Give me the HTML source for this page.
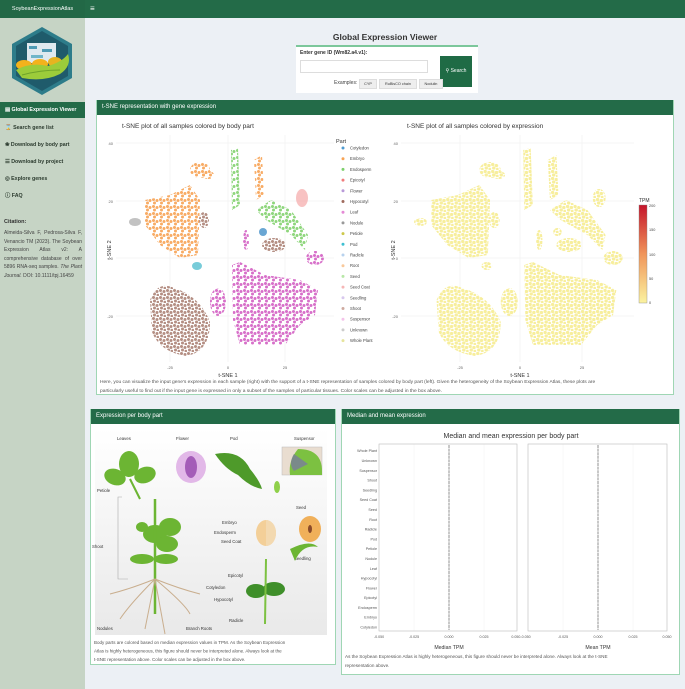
<!DOCTYPE html>
<html><head><meta charset="utf-8">
<style>
*{box-sizing:border-box;margin:0;padding:0}
body{width:685px;height:689px;overflow:hidden;background:#ecf0f5;font-family:"Liberation Sans",sans-serif;position:relative;color:#333}
.abs{position:absolute}
#hdr{left:0;top:0;width:685px;height:18px;background:#236b48}
#brand{left:0;top:0;width:85px;height:18px;background:#226846;color:#fff;font-size:5.5px;text-align:center;line-height:18px}
#side{left:0;top:18px;width:85px;height:671px;background:#c6d4c5}
.mi{position:absolute;left:0;width:85px;height:16px;font-size:5.3px;font-weight:bold;color:#2c3b2f;padding-left:5px;line-height:16px;white-space:nowrap}
.box{position:absolute;background:#fff;border:1px solid #9fd6b4;border-top:none}
.bh{background:#236b48;color:#fff;font-size:6px;height:15px;line-height:15px;padding-left:5px}
.sm{font-size:5px;color:#555;line-height:8.5px}
</style></head><body>
<div id="hdr" class="abs"></div>
<div id="brand" class="abs">SoybeanExpressionAtlas</div>
<div class="abs" style="left:90px;top:4px;color:#fff;font-size:8px">&#8801;</div>
<div id="side" class="abs"></div>
<svg class="abs" style="left:0;top:18px" width="85" height="80">
<polygon points="42,9 72,26 72,60 42,77 12,60 12,26" fill="#2d7c8a"/>
<polygon points="42,13 68,28 68,58 42,73 16,58 16,28" fill="#1f5b6b"/>
<rect x="27" y="25" width="29" height="20" fill="#dfe9ef"/>
<rect x="29" y="28" width="8" height="3" fill="#4f9bb5"/><rect x="42" y="31" width="10" height="3" fill="#4f9bb5"/><rect x="31" y="37" width="12" height="3" fill="#6fb5c9"/>
<ellipse cx="24" cy="47" rx="8" ry="5" fill="#f3b21c"/><ellipse cx="40" cy="46" rx="8" ry="5" fill="#f3b21c"/><ellipse cx="55" cy="44" rx="7" ry="5" fill="#e6b420"/>
<path d="M16 52 Q30 44 48 48 Q62 44 68 36 Q72 48 60 56 Q44 64 22 60 Z" fill="#9ccc3a"/>
<path d="M22 57 Q40 52 60 52" stroke="#6fa32a" stroke-width="1" fill="none"/>
</svg>
<div class="mi" style="top:102px;background:#236b48;color:#fff">&#9636; Global Expression Viewer</div>
<div class="mi" style="top:120px">&#8987; Search gene list</div>
<div class="mi" style="top:137px">&#10048; Download by body part</div>
<div class="mi" style="top:154px">&#9776; Download by project</div>
<div class="mi" style="top:171px">&#9678; Explore genes</div>
<div class="mi" style="top:188px">&#9432; FAQ</div>
<div class="abs" style="left:4px;top:219px;font-size:5.5px;font-weight:bold;color:#333">Citation:</div>
<div class="abs sm" style="left:4px;top:229px;width:78px;text-align:justify;color:#444">Almeida-Silva F, Pedrosa-Silva F, Venancio TM (2023). The Soybean Expression Atlas v2: A comprehensive database of over 5896 RNA-seq samples. <i>The Plant Journal.</i> DOI: 10.1111/tpj.16459</div>

<div class="abs" style="left:296px;top:32px;width:178px;text-align:center;font-size:8.5px;font-weight:bold;color:#333">Global Expression Viewer</div>
<div class="abs" style="left:296px;top:45px;width:182px;height:48px;background:#fff;border-top:2px solid #7cc79b"></div>
<div class="abs" style="left:300px;top:50px;font-size:5px;font-weight:bold">Enter gene ID (Wm82.a4.v1):</div>
<div class="abs" style="left:300px;top:60px;width:128px;height:13px;border:1px solid #ddd;background:#fff"></div>
<div class="abs" style="left:440px;top:56px;width:32px;height:31px;background:#1f6b45;color:#fff;font-size:5px;text-align:center;line-height:31px">&#9906; Search</div>
<div class="abs" style="left:334px;top:80px;font-size:5px;color:#444">Examples:</div>
<div class="abs" style="left:359px;top:79px;width:18px;height:10px;background:#eee;border:1px solid #ddd;font-size:3.8px;text-align:center;line-height:9px">CYP</div>
<div class="abs" style="left:379px;top:79px;width:38px;height:10px;background:#eee;border:1px solid #ddd;font-size:3.8px;text-align:center;line-height:9px">RuBisCO chain</div>
<div class="abs" style="left:419px;top:79px;width:24px;height:10px;background:#eee;border:1px solid #ddd;font-size:3.8px;text-align:center;line-height:9px">Nodulin</div>

<div class="box" style="left:96px;top:100px;width:578px;height:295px"><div class="bh">t-SNE representation with gene expression</div></div>
<svg class="abs" style="left:96px;top:100px" width="578" height="295" font-family="Liberation Sans" >
<defs>
<pattern id="pB" width="7" height="7" patternUnits="userSpaceOnUse" fill="#b48e83" opacity=".75"><circle cx="1.5" cy="1.5" r="1.5"/><circle cx="5" cy="2.5" r="1.5"/><circle cx="2.5" cy="5" r="1.5"/><circle cx="5.8" cy="6" r="1.3"/></pattern>
<pattern id="pP" width="7" height="7" patternUnits="userSpaceOnUse" fill="#d76fc9" opacity=".75"><circle cx="1.5" cy="1.5" r="1.5"/><circle cx="5" cy="2.5" r="1.5"/><circle cx="2.5" cy="5" r="1.5"/></pattern>
<pattern id="pO" width="7" height="7" patternUnits="userSpaceOnUse" fill="#f8ab64" opacity=".75"><circle cx="1.5" cy="1.5" r="1.5"/><circle cx="5" cy="2.5" r="1.5"/><circle cx="2.5" cy="5" r="1.5"/></pattern>
<pattern id="pG" width="7" height="7" patternUnits="userSpaceOnUse" fill="#8ed67c" opacity=".8"><circle cx="1.5" cy="1.5" r="1.5"/><circle cx="5" cy="2.5" r="1.5"/><circle cx="2.5" cy="5" r="1.5"/></pattern>
<pattern id="pY" width="7" height="7" patternUnits="userSpaceOnUse" fill="#f7ee9c"><circle cx="1.5" cy="1.5" r="1.6"/><circle cx="5" cy="2.5" r="1.6"/><circle cx="2.5" cy="5" r="1.6"/><circle cx="5.8" cy="6" r="1.3"/></pattern>
<linearGradient id="cb" x1="0" y1="1" x2="0" y2="0"><stop offset="0" stop-color="#fbf3a0"/><stop offset=".5" stop-color="#f0955a"/><stop offset="1" stop-color="#c5152b"/></linearGradient>
</defs>
<text x="26" y="28" font-size="6.5" fill="#333">t-SNE plot of all samples colored by body part</text>
<text x="311" y="28" font-size="6.5" fill="#333">t-SNE plot of all samples colored by expression</text>
<g stroke="#eee" stroke-width=".6">
<line x1="20" y1="43" x2="238" y2="43"/><line x1="20" y1="101" x2="238" y2="101"/><line x1="20" y1="158" x2="238" y2="158"/><line x1="20" y1="216" x2="238" y2="216"/>
<line x1="74" y1="35" x2="74" y2="262"/><line x1="132" y1="35" x2="132" y2="262"/><line x1="189" y1="35" x2="189" y2="262"/>
<line x1="305" y1="43" x2="538" y2="43"/><line x1="305" y1="101" x2="538" y2="101"/><line x1="305" y1="158" x2="538" y2="158"/><line x1="305" y1="216" x2="538" y2="216"/>
<line x1="364" y1="35" x2="364" y2="262"/><line x1="424" y1="35" x2="424" y2="262"/><line x1="486" y1="35" x2="486" y2="262"/>
</g>
<g>
<path d="M54 200 Q62 180 78 188 Q104 196 114 222 Q114 252 90 256 Q64 252 56 232 Z" fill="url(#pB)"/>
<path d="M136 165 L144 162 L169 175 L204 180 L222 190 L219 215 L204 225 L189 245 L144 245 L137 220 Z" fill="url(#pP)"/>
<ellipse cx="122" cy="202" rx="8" ry="14" fill="url(#pP)"/>
<ellipse cx="219" cy="158" rx="9" ry="7" fill="url(#pP)"/>
<path d="M49 100 L74 95 L94 85 L104 100 L102 155 L84 158 L64 145 L49 125 Z" fill="url(#pO)"/>
<ellipse cx="104" cy="70" rx="10" ry="8" fill="url(#pO)"/>
<ellipse cx="39" cy="122" rx="6" ry="4" fill="#999" opacity=".6"/>
<path d="M135 50 L142 48 L144 105 L136 110 Z" fill="url(#pG)"/>
<path d="M160 110 L175 100 L195 110 L212 135 L209 150 L195 135 L170 120 Z" fill="url(#pG)"/>
<path d="M158 60 L166 55 L168 95 L160 100 Z" fill="url(#pO)"/>
<ellipse cx="206" cy="98" rx="6" ry="9" fill="#f39a9a" opacity=".6"/>
<ellipse cx="178" cy="145" rx="12" ry="7" fill="url(#pB)"/>
<ellipse cx="101" cy="166" rx="5" ry="4" fill="#3fb7c9" opacity=".7"/>
<ellipse cx="108" cy="120" rx="5" ry="8" fill="url(#pB)"/>
<ellipse cx="167" cy="132" rx="4" ry="4" fill="#2b80c0" opacity=".7"/>
<ellipse cx="112" cy="75" rx="6" ry="4" fill="url(#pO)"/>
<ellipse cx="150" cy="140" rx="3" ry="10" fill="url(#pP)"/>
</g>
<g transform="translate(424,0) scale(1.07,1) translate(-132,0)" fill="url(#pY)">
<path d="M54 200 Q62 180 78 188 Q104 196 114 222 Q114 252 90 256 Q64 252 56 232 Z"/>
<path d="M136 165 L144 162 L169 175 L204 180 L222 190 L219 215 L204 225 L189 245 L144 245 L137 220 Z"/>
<ellipse cx="122" cy="202" rx="8" ry="14"/><ellipse cx="219" cy="158" rx="9" ry="7"/>
<path d="M49 100 L74 95 L94 85 L104 100 L102 155 L84 158 L64 145 L49 125 Z"/>
<ellipse cx="104" cy="70" rx="10" ry="8"/><ellipse cx="39" cy="122" rx="6" ry="4"/>
<path d="M135 50 L142 48 L144 105 L136 110 Z"/>
<path d="M160 110 L175 100 L195 110 L212 135 L209 150 L195 135 L170 120 Z"/>
<path d="M158 60 L166 55 L168 95 L160 100 Z"/>
<ellipse cx="206" cy="98" rx="6" ry="9"/><ellipse cx="178" cy="145" rx="12" ry="7"/>
<ellipse cx="101" cy="166" rx="5" ry="4"/><ellipse cx="108" cy="120" rx="5" ry="8"/><ellipse cx="167" cy="132" rx="4" ry="4"/>
<ellipse cx="112" cy="75" rx="6" ry="4"/><ellipse cx="150" cy="140" rx="3" ry="10"/>
</g>
<g font-size="4" fill="#666">
<text x="17" y="45" text-anchor="end">40</text><text x="17" y="103" text-anchor="end">20</text><text x="17" y="160" text-anchor="end">0</text><text x="17" y="218" text-anchor="end">-20</text>
<text x="74" y="269" text-anchor="middle">-25</text><text x="132" y="269" text-anchor="middle">0</text><text x="189" y="269" text-anchor="middle">25</text>
<text x="302" y="45" text-anchor="end">40</text><text x="302" y="103" text-anchor="end">20</text><text x="302" y="160" text-anchor="end">0</text><text x="302" y="218" text-anchor="end">-20</text>
<text x="364" y="269" text-anchor="middle">-25</text><text x="424" y="269" text-anchor="middle">0</text><text x="486" y="269" text-anchor="middle">25</text>
</g>
<text x="132" y="277" font-size="5.5" text-anchor="middle" fill="#333">t-SNE 1</text>
<text x="424" y="277" font-size="5.5" text-anchor="middle" fill="#333">t-SNE 1</text>
<text transform="translate(15,150) rotate(-90)" font-size="5.5" text-anchor="middle" fill="#333">t-SNE 2</text>
<text transform="translate(299,150) rotate(-90)" font-size="5.5" text-anchor="middle" fill="#333">t-SNE 2</text>
<text x="240" y="43" font-size="5.5" fill="#333">Part</text>
<g font-size="4.2" fill="#444">
<circle cx="247" cy="48" r="1.5" fill="#4f9bd1"/><text x="254" y="49.5">Cotyledon</text>
<circle cx="247" cy="58.7" r="1.5" fill="#f8a354"/><text x="254" y="60.2">Embryo</text>
<circle cx="247" cy="69.4" r="1.5" fill="#7dd06c"/><text x="254" y="70.9">Endosperm</text>
<circle cx="247" cy="80.1" r="1.5" fill="#f07c7c"/><text x="254" y="81.6">Epicotyl</text>
<circle cx="247" cy="90.8" r="1.5" fill="#b89ad8"/><text x="254" y="92.3">Flower</text>
<circle cx="247" cy="101.5" r="1.5" fill="#a06b5e"/><text x="254" y="103">Hypocotyl</text>
<circle cx="247" cy="112.2" r="1.5" fill="#e58ad6"/><text x="254" y="113.7">Leaf</text>
<circle cx="247" cy="122.9" r="1.5" fill="#999"/><text x="254" y="124.4">Nodule</text>
<circle cx="247" cy="133.6" r="1.5" fill="#cdc84a"/><text x="254" y="135.1">Petiole</text>
<circle cx="247" cy="144.3" r="1.5" fill="#3fc0d2"/><text x="254" y="145.8">Pod</text>
<circle cx="247" cy="155" r="1.5" fill="#b8d2ee"/><text x="254" y="156.5">Radicle</text>
<circle cx="247" cy="165.7" r="1.5" fill="#f9c99b"/><text x="254" y="167.2">Root</text>
<circle cx="247" cy="176.4" r="1.5" fill="#b8e8a8"/><text x="254" y="177.9">Seed</text>
<circle cx="247" cy="187.1" r="1.5" fill="#f6b6b6"/><text x="254" y="188.6">Seed Coat</text>
<circle cx="247" cy="197.8" r="1.5" fill="#d8c8ee"/><text x="254" y="199.3">Seedling</text>
<circle cx="247" cy="208.5" r="1.5" fill="#cfaaa0"/><text x="254" y="210">Shoot</text>
<circle cx="247" cy="219.2" r="1.5" fill="#f4c3ea"/><text x="254" y="220.7">Suspensor</text>
<circle cx="247" cy="229.9" r="1.5" fill="#ccc"/><text x="254" y="231.4">Unknown</text>
<circle cx="247" cy="240.6" r="1.5" fill="#e6e49c"/><text x="254" y="242.1">Whole Plant</text>
</g>
<text x="543" y="102" font-size="5" fill="#333">TPM</text>
<rect x="543" y="105" width="8" height="98" fill="url(#cb)" stroke="#888" stroke-width=".4"/>
<g font-size="3.8" fill="#444"><text x="553" y="107">200</text><text x="553" y="131">150</text><text x="553" y="156">100</text><text x="553" y="180">50</text><text x="553" y="204">0</text></g>
<text x="4" y="283" font-size="4.9" fill="#555">Here, you can visualize the input gene's expression in each sample (right) with the support of a t-SNE representation of samples colored by body part (left). Given the heterogeneity of the Soybean Expression Atlas, these plots are</text>
<text x="4" y="292" font-size="4.9" fill="#555">particularly useful to find out if the input gene is expressed in only a subset of the samples of particular tissues. Color scales can be adjusted in the box above.</text>
</svg>

<div class="box" style="left:90px;top:409px;width:246px;height:256px"><div class="bh">Expression per body part</div></div>
<svg class="abs" style="left:90px;top:409px" width="246" height="256" font-family="Liberation Sans">
<defs><linearGradient id="bg" x1="0" y1="0" x2="0" y2="1"><stop offset="0" stop-color="#fff"/><stop offset="1" stop-color="#e9e9e9"/></linearGradient></defs>
<rect x="5" y="19" width="232" height="207" fill="url(#bg)"/>
<g font-size="4.3" fill="#333">
<text x="27" y="31">Leaves</text><text x="86" y="31">Flower</text><text x="140" y="31">Pod</text><text x="204" y="31">Suspensor</text>
<text x="7" y="83">Petiole</text><text x="206" y="100">Seed</text><text x="2" y="139">Shoot</text>
<text x="132" y="115">Embryo</text><text x="124" y="125">Endosperm</text><text x="131" y="134">Seed Coat</text><text x="204" y="151">Seedling</text>
<text x="138" y="168">Epicotyl</text><text x="116" y="180">Cotyledon</text><text x="124" y="192">Hypocotyl</text><text x="139" y="213">Radicle</text>
<text x="7" y="221">Nodules</text><text x="96" y="221">Branch Roots</text>
</g>
<g fill="#6cb533">
<ellipse cx="39" cy="55" rx="10" ry="13"/><ellipse cx="25" cy="68" rx="11" ry="8" transform="rotate(20 25 68)"/><ellipse cx="55" cy="66" rx="11" ry="8" transform="rotate(-20 55 66)"/>
<path d="M125 45 Q150 40 160 60 Q170 72 172 80 Q160 78 148 66 Q135 60 125 45Z" fill="#4e9a2a"/>
<ellipse cx="65" cy="125" rx="12" ry="9"/><ellipse cx="80" cy="118" rx="11" ry="9"/><ellipse cx="77" cy="135" rx="11" ry="8"/>
<ellipse cx="52" cy="150" rx="12" ry="5"/><ellipse cx="76" cy="150" rx="12" ry="5"/><ellipse cx="52" cy="118" rx="6" ry="5"/>
<ellipse cx="166" cy="182" rx="10" ry="7" fill="#3f8f2a"/><ellipse cx="184" cy="180" rx="11" ry="7" fill="#3f8f2a"/>
<path d="M200 140 Q220 130 228 138 Q212 135 205 152 Z"/>
</g>
<path d="M40 70 L50 90" stroke="#6cb533" stroke-width="2"/>
<ellipse cx="101" cy="58" rx="15" ry="16" fill="#e2b8e8"/><ellipse cx="101" cy="58" rx="6" ry="11" fill="#a45cb8"/>
<rect x="192" y="38" width="40" height="28" fill="#e9ddd0" stroke="#bbb" stroke-width=".5"/>
<path d="M208 40 Q232 40 232 62 L232 66 L200 66 Q198 52 208 40Z" fill="#7cc141"/>
<path d="M204 45 L218 55 L204 62 Q198 55 204 45Z" fill="#7a8a8a"/>
<ellipse cx="187" cy="78" rx="3" ry="6" fill="#8fd04a"/>
<ellipse cx="176" cy="124" rx="10" ry="13" fill="#f3cf98"/><path d="M176 111 A10 13 0 0 1 176 137" fill="#f3d9b0"/>
<ellipse cx="220" cy="120" rx="11" ry="13" fill="#f0b05a"/><ellipse cx="220" cy="120" rx="2" ry="4" fill="#8a4a2a"/>
<path d="M65 90 L65 205" stroke="#6cb533" stroke-width="2.5"/>
<path d="M32 88 L28 88 L28 170 L38 170" stroke="#aaa" fill="none" stroke-width=".6"/>
<g stroke="#c9ae8e" stroke-width="1" fill="none"><path d="M65 170 Q40 180 20 185"/><path d="M65 170 Q90 180 110 185"/><path d="M65 170 L55 220"/><path d="M65 170 L75 225"/><path d="M65 170 Q40 195 30 210"/><path d="M65 170 Q95 195 100 205"/></g>
<path d="M176 150 L175 215" stroke="#7cc141" stroke-width="2"/>
<g font-size="4.5" fill="#555">
<text x="4" y="235">Body parts are colored based on median expression values in TPM. As the Soybean Expression</text>
<text x="4" y="243.5">Atlas is highly heterogeneous, this figure should never be interpreted alone. Always look at the</text>
<text x="4" y="252">t-SNE representation above. Color scales can be adjusted in the box above.</text>
</g>
</svg>

<div class="box" style="left:341px;top:409px;width:339px;height:266px"><div class="bh">Median and mean expression</div></div>
<svg class="abs" style="left:341px;top:409px" width="339" height="266" font-family="Liberation Sans">
<text x="170" y="29" font-size="7" text-anchor="middle" fill="#333">Median and mean expression per body part</text>
<g stroke="#f0f0f0" stroke-width=".5">
<line x1="73" y1="35" x2="73" y2="222"/><line x1="143" y1="35" x2="143" y2="222"/>
<line x1="222" y1="35" x2="222" y2="222"/><line x1="292" y1="35" x2="292" y2="222"/>
</g>
<rect x="38" y="35" width="138" height="187" fill="none" stroke="#bbb" stroke-width=".6"/>
<rect x="187" y="35" width="139" height="187" fill="none" stroke="#bbb" stroke-width=".6"/>
<line x1="108" y1="36" x2="108" y2="221" stroke="#777" stroke-width=".8" stroke-dasharray="3,.6"/>
<line x1="257" y1="36" x2="257" y2="221" stroke="#777" stroke-width=".8" stroke-dasharray="3,.6"/>
<g font-size="3.7" fill="#555" text-anchor="end">
<text x="36" y="43">Whole Plant</text><text x="36" y="53">Unknown</text><text x="36" y="63">Suspensor</text><text x="36" y="72.5">Shoot</text><text x="36" y="82.5">Seedling</text><text x="36" y="92">Seed Coat</text><text x="36" y="102">Seed</text><text x="36" y="112">Root</text><text x="36" y="121.5">Radicle</text><text x="36" y="131.5">Pod</text><text x="36" y="141">Petiole</text><text x="36" y="151">Nodule</text><text x="36" y="161">Leaf</text><text x="36" y="170.5">Hypocotyl</text><text x="36" y="180.5">Flower</text><text x="36" y="190">Epicotyl</text><text x="36" y="200">Endosperm</text><text x="36" y="209.5">Embryo</text><text x="36" y="219.5">Cotyledon</text>
</g>
<g font-size="3.6" fill="#555" text-anchor="middle">
<text x="38" y="229">-0.050</text><text x="73" y="229">-0.025</text><text x="108" y="229">0.000</text><text x="143" y="229">0.025</text><text x="180" y="229">0.050-0.050</text><text x="222" y="229">-0.025</text><text x="257" y="229">0.000</text><text x="292" y="229">0.025</text><text x="326" y="229">0.050</text>
</g>
<text x="108" y="240" font-size="5.2" text-anchor="middle" fill="#333">Median TPM</text>
<text x="257" y="240" font-size="5.2" text-anchor="middle" fill="#333">Mean TPM</text>
<g font-size="4.6" fill="#555"><text x="4" y="249">As the Soybean Expression Atlas is highly heterogeneous, this figure should never be interpreted alone. Always look at the t-SNE</text><text x="4" y="258">representation above.</text></g>
</svg>
</body></html>
